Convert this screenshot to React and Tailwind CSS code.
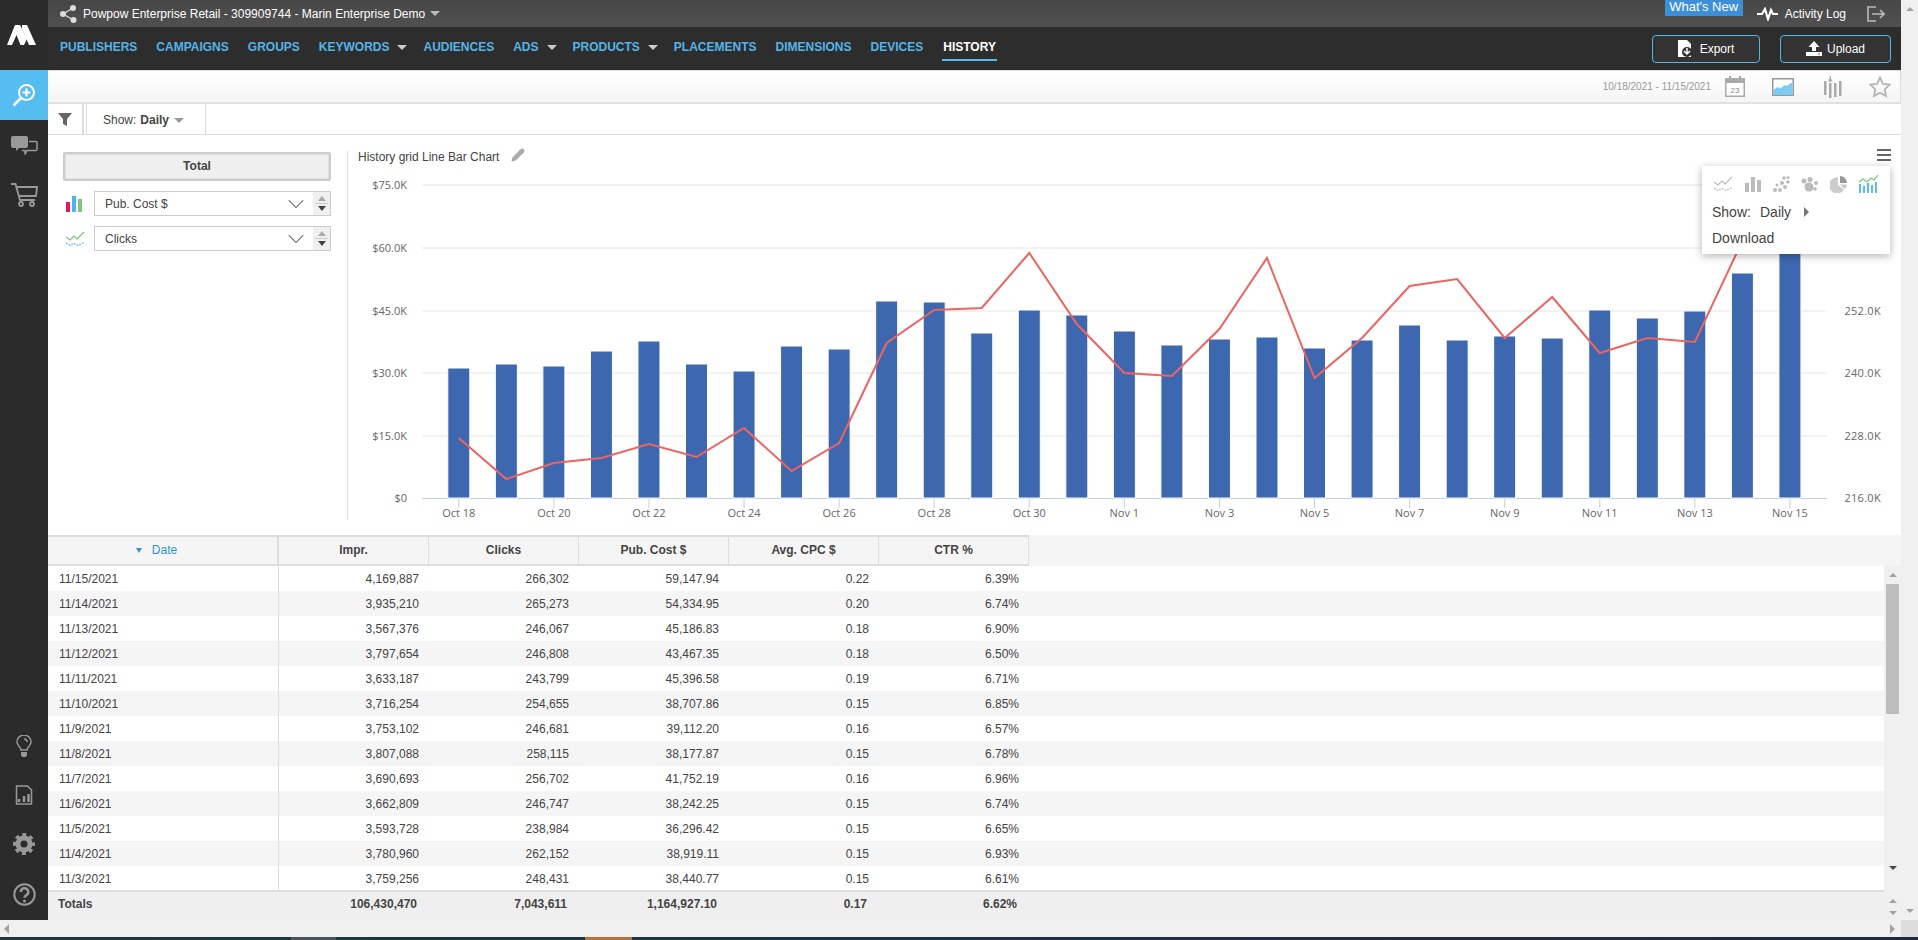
import React from 'react';
import { ChevronDown, Pencil } from 'lucide-react';

const NAV = [
  { label: 'PUBLISHERS' },
  { label: 'CAMPAIGNS' },
  { label: 'GROUPS' },
  { label: 'KEYWORDS', caret: true },
  { label: 'AUDIENCES' },
  { label: 'ADS', caret: true },
  { label: 'PRODUCTS', caret: true },
  { label: 'PLACEMENTS' },
  { label: 'DIMENSIONS' },
  { label: 'DEVICES' },
  { label: 'HISTORY', active: true },
];

const ROWS = [
  ['11/15/2021', '4,169,887', '266,302', '59,147.94', '0.22', '6.39%'],
  ['11/14/2021', '3,935,210', '265,273', '54,334.95', '0.20', '6.74%'],
  ['11/13/2021', '3,567,376', '246,067', '45,186.83', '0.18', '6.90%'],
  ['11/12/2021', '3,797,654', '246,808', '43,467.35', '0.18', '6.50%'],
  ['11/11/2021', '3,633,187', '243,799', '45,396.58', '0.19', '6.71%'],
  ['11/10/2021', '3,716,254', '254,655', '38,707.86', '0.15', '6.85%'],
  ['11/9/2021', '3,753,102', '246,681', '39,112.20', '0.16', '6.57%'],
  ['11/8/2021', '3,807,088', '258,115', '38,177.87', '0.15', '6.78%'],
  ['11/7/2021', '3,690,693', '256,702', '41,752.19', '0.16', '6.96%'],
  ['11/6/2021', '3,662,809', '246,747', '38,242.25', '0.15', '6.74%'],
  ['11/5/2021', '3,593,728', '238,984', '36,296.42', '0.15', '6.65%'],
  ['11/4/2021', '3,780,960', '262,152', '38,919.11', '0.15', '6.93%'],
  ['11/3/2021', '3,759,256', '248,431', '38,440.77', '0.15', '6.61%'],
];

const TOTALS = ['Totals', '106,430,470', '7,043,611', '1,164,927.10', '0.17', '6.62%'];

// chart pixel data, oldest day first
const BAR_TOPS = [368, 364, 366, 351, 341, 364, 371, 346, 349, 301, 302, 333, 310, 315, 331, 345, 339, 337, 348, 340, 325, 340, 336, 338, 310, 318, 311, 273, 251];
const LINE_Y = [438, 479, 463, 458, 444, 457, 428, 471, 443, 343, 310, 308, 253, 324, 373, 376, 329, 258, 378, 338, 286, 279, 338, 297, 353, 338, 342, 241, 236];
const X_LABELS = ['Oct 18', 'Oct 20', 'Oct 22', 'Oct 24', 'Oct 26', 'Oct 28', 'Oct 30', 'Nov 1', 'Nov 3', 'Nov 5', 'Nov 7', 'Nov 9', 'Nov 11', 'Nov 13', 'Nov 15'];
const GRID_Y = [185, 248, 311, 373, 436, 498];
const LEFT_AXIS = ['$75.0K', '$60.0K', '$45.0K', '$30.0K', '$15.0K', '$0'];
const RIGHT_AXIS = ['', '', '252.0K', '240.0K', '228.0K', '216.0K'];

const dayX = (i) => 458.8 + i * 47.54;

const Caret = ({ className = 'border-t-[#bbb]' }) => (
  <span className={`inline-block w-0 h-0 border-x-[5px] border-x-transparent border-t-[5px] ${className}`} />
);

const Logo = () => (
  <svg width="29" height="20" viewBox="0 0 29 20" fill="#fff">
    <polygon points="0,20 8,0 13,0 20,14 17,20 13.500,20 9.500,10 5,20" />
    <polygon points="15,0 20,0 29,20 22,20 15,4" />
  </svg>
);

const SearchIcon = () => (
  <svg width="24" height="24" viewBox="0 0 24 24" fill="none" stroke="#fff" strokeWidth="2">
    <circle cx="14.500" cy="9.500" r="7.500" />
    <path d="M9 15 L1.500 22.500" strokeWidth="2.500" />
    <path d="M14.500 5.500v8M10.500 9.500h8" strokeWidth="2.200" />
  </svg>
);

const ChatIcon = () => (
  <svg width="27" height="20" viewBox="0 0 27 20">
    <path d="M2 0h13a2 2 0 0 1 2 2v8a2 2 0 0 1-2 2H8l-3 3v-3H2a2 2 0 0 1-2-2V2a2 2 0 0 1 2-2z" fill="#999" />
    <path d="M18 5.500h7a1 1 0 0 1 1 1v7a1 1 0 0 1-1 1h-9l-2 4v-4h-3" fill="none" stroke="#999" strokeWidth="1.500" />
  </svg>
);

const CartIcon = () => (
  <svg width="27" height="24" viewBox="0 0 27 24" fill="none" stroke="#999" strokeWidth="1.800">
    <path d="M0 1h4.500l4.500 16h15" />
    <path d="M6 4h20l-1 9H8" />
    <circle cx="10" cy="21" r="2" />
    <circle cx="21" cy="21" r="2" />
  </svg>
);

const BulbIcon = () => (
  <svg width="16" height="22" viewBox="0 0 16 22" fill="none" stroke="#999" strokeWidth="1.500">
    <path d="M5 15c0-3-4-4-4-8a7 7 0 0 1 14 0c0 4-4 5-4 8z" />
    <path d="M5 17h6v3a2 2 0 0 1-2 2H7a2 2 0 0 1-2-2z" fill="#999" stroke="none" />
    <path d="M8 4a3 3 0 0 1 3 3" />
  </svg>
);

const ReportIcon = () => (
  <svg width="18" height="20" viewBox="0 0 18 20" fill="none" stroke="#999" strokeWidth="1.500">
    <path d="M1.500 1h11l4 4v14h-15z" />
    <path d="M4 17v-3M9 17v-6M13.500 17V9" strokeWidth="2.500" />
  </svg>
);

// ring plus a dashed outer circle for the eight teeth
const GearIcon = () => (
  <svg width="22" height="22" viewBox="0 0 22 22" fill="none" stroke="#999">
    <circle cx="11" cy="11" r="6" strokeWidth="5" />
    <circle cx="11" cy="11" r="9.500" strokeWidth="3" strokeDasharray="3.960 3.500" strokeDashoffset="2" />
  </svg>
);

const HelpIcon = () => (
  <svg width="23" height="23" viewBox="0 0 23 23" fill="none" stroke="#999" strokeWidth="2">
    <circle cx="11.500" cy="11.500" r="10.200" />
    <path d="M7.800 9a3.700 3.700 0 1 1 5.600 3.100c-1.300.8-1.900 1.300-1.900 2.700" strokeWidth="2.500" />
    <circle cx="11.500" cy="18" r="1.500" fill="#999" stroke="none" />
  </svg>
);

const ShareIcon = () => (
  <svg width="17" height="18" viewBox="0 0 17 18" fill="#ddd">
    <circle cx="3" cy="9" r="3" />
    <circle cx="13" cy="3" r="3" />
    <circle cx="13.500" cy="15" r="3" />
    <path d="M3 9 13 3M3 9l10.500 6" stroke="#ddd" strokeWidth="1.300" />
  </svg>
);

const PulseIcon = () => (
  <svg width="21" height="14" viewBox="0 0 21 14" fill="none" stroke="#fff" strokeWidth="2.200">
    <path d="M0 7h5l3 -5 3 10 3-9 2 4h5" />
  </svg>
);

const LogoutIcon = () => (
  <svg width="18" height="16" viewBox="0 0 18 16" fill="none" stroke="#bbb" strokeWidth="1.600">
    <path d="M9 1H1v14h8" />
    <path d="M5 8h12M13 4l4 4-4 4" />
  </svg>
);

const ExportIcon = () => (
  <svg width="14" height="17" viewBox="0 0 14 17">
    <path d="M0 0h9l4 4v13H0z" fill="#fff" />
    <circle cx="9" cy="12" r="5" fill="#333" />
    <path d="M9 8v5M6 11l3 3 3-3" fill="none" stroke="#fff" strokeWidth="1.500" />
  </svg>
);

const UploadIcon = () => (
  <svg width="16" height="15" viewBox="0 0 16 15">
    <path d="M8 0l5.500 6H10v4H6V6H2.500z" fill="#fff" />
    <path d="M0 11h16v4H0z" fill="#fff" />
    <path d="M12 12.500h2v1h-2z" fill="#e33" />
  </svg>
);

const CalendarIcon = () => (
  <svg width="20" height="21" viewBox="0 0 20 21">
    <path d="M0 2h20v19H0z" fill="#aaa" />
    <path d="M1.500 7h17v12.500h-17z" fill="#fff" />
    <path d="M4 0h2v3H4zM14 0h2v3h-2z" fill="#aaa" />
    <text x="10" y="17" textAnchor="middle" fontSize="8" fill="#888" fontFamily="Liberation Sans">23</text>
  </svg>
);

const AreaChartIcon = () => (
  <svg width="22" height="18" viewBox="0 0 22 18">
    <path d="M0 0h22v18H0z" fill="#999" />
    <path d="M1.500 1.500h19v15h-19z" fill="#fff" />
    <path d="M1.500 12l4-3 3 1.500 4-3.500 2 1 6-4v13h-19z" fill="#7ccbf2" />
  </svg>
);

const ColumnsIcon = () => (
  <svg width="18" height="22" viewBox="0 0 18 22" fill="#aaa">
    <path d="M0 5h2.500v14H0zM5 7h2.500v15H5zM10 7h2.500v14H10zM15 5h2.500v15H15z" />
    <path d="M6.300 0v5M4.500 3.500l1.800 2 1.800-2" stroke="#aaa" fill="none" strokeWidth="1.300" />
  </svg>
);

const StarIcon = () => (
  <svg width="22" height="22" viewBox="0 0 22 22" fill="none" stroke="#b5b5b5" strokeWidth="1.800">
    <path d="M11 1.500l2.900 6.300 6.800.8-5 4.700 1.300 6.800L11 16.800l-6 3.300 1.300-6.800-5-4.700 6.800-.8z" />
  </svg>
);

const BarMiniIcon = () => (
  <svg width="16" height="16" viewBox="0 0 16 16">
    <path d="M0 6h4v10H0z" fill="#e8175d" />
    <path d="M6 0h4v16H6z" fill="#4fb3e8" />
    <path d="M12 3h4v13h-4z" fill="#7dc67d" />
  </svg>
);

const LineMiniIcon = ({ top = '#7dc67d', bottom = '#5bbcf0' }) => (
  <svg width="19" height="16" viewBox="0 0 19 16" fill="none" strokeWidth="1.200">
    <path d="M0 6l4 3 4-4 3 3 7-7" stroke={top} />
    <path d="M0 12l4 2.500 4-2 4 2 6-3" stroke={bottom} strokeDasharray="2 1" />
  </svg>
);

const MENU_ICONS = [
  <LineMiniIcon key="line" top="#bbb" bottom="#bbb" />,
  <svg key="bar" width="16" height="16" viewBox="0 0 16 16" fill="#bbb"><path d="M0 7h4v9H0zM6 1h4v15H6zM12 4h4v12h-4z" /></svg>,
  <svg key="scatter" width="17" height="16" viewBox="0 0 17 16" fill="#bbb">
    <circle cx="2" cy="14" r="2" /><circle cx="7" cy="14" r="2" /><circle cx="12" cy="11" r="2" /><circle cx="4" cy="9" r="1.500" /><circle cx="9" cy="7" r="2" /><circle cx="15" cy="6" r="1.800" /><circle cx="11" cy="2" r="1.800" /><circle cx="15" cy="1.500" r="1.500" />
  </svg>,
  <svg key="bubble" width="17" height="15" viewBox="0 0 17 15" fill="#bbb">
    <circle cx="8" cy="10" r="4.500" /><circle cx="3" cy="4" r="2.500" /><circle cx="9" cy="2.500" r="2.500" /><circle cx="15" cy="6" r="2" /><circle cx="14" cy="12" r="1.800" />
  </svg>,
  <svg key="pie" width="17" height="17" viewBox="0 0 17 17">
    <path d="M8 1.500V9l6 4.500A8 8 0 1 1 8 1.500z" fill="#ccc" /><path d="M10 0a7 7 0 0 1 7 7h-7z" fill="#999" /><path d="M9.500 8.500H17a8 8 0 0 1-1.800 4.800z" fill="#ccc" />
  </svg>,
  <svg key="combo" width="19" height="18" viewBox="0 0 19 18" fill="none">
    <path d="M0 7l4-3 4 3 4-4 3 2 4-5" stroke="#7dc67d" strokeWidth="1.300" />
    <path d="M1 9v9M5 11v7M9 8v10M13 10v8M17 7v11" stroke="#5bbcf0" strokeWidth="2" />
  </svg>,
];

const Spinner = () => (
  <div className="flex flex-col items-center justify-center gap-[4px] w-[17px] h-full bg-[#f0f0f0] ml-[3px]">
    <span className="w-0 h-0 border-x-[4px] border-x-transparent border-b-[5px] border-b-[#aaa]" />
    <span className="w-[13px] border-t border-[#ccc] -my-[2px]" />
    <span className="w-0 h-0 border-x-[4px] border-x-transparent border-t-[5px] border-t-[#444]" />
  </div>
);

const MetricSelect = ({ icon, label }) => (
  <div className="flex items-center h-[25px]">
    <div className="w-[31px] pl-[3px] flex items-center">{icon}</div>
    <div className="flex-1 h-full flex items-center border border-[#ccc] pl-[10px]">
      <span className="flex-1 text-[#444]">{label}</span>
      <ChevronDown size={28} strokeWidth={0.9} color="#555" className="-my-[2px]" />
      <Spinner />
    </div>
  </div>
);

const Chart = () => (
  <svg width="1553" height="364" viewBox="348 171 1553 364" className="block" fontFamily="'Open Sans', sans-serif" fontSize="11" fill="#666">
    {GRID_Y.slice(0, 5).map((y) => (
      <line key={y} x1="422" x2="1827" y1={y} y2={y} stroke="#e6e6e6" strokeWidth="1" />
    ))}
    <line x1="422" x2="1827" y1="498.500" y2="498.500" stroke="#c0d0e0" />
    {GRID_Y.map((y, i) => (
      <text key={y} x="407" y={y + 4} textAnchor="end">{LEFT_AXIS[i]}</text>
    ))}
    {GRID_Y.map((y, i) => (
      <text key={y} x="1881" y={y + 4} textAnchor="end" letterSpacing="0.300">{RIGHT_AXIS[i]}</text>
    ))}
    {X_LABELS.map((label, i) => (
      <g key={label}>
        <line x1={dayX(i * 2)} x2={dayX(i * 2)} y1="498" y2="508" stroke="#c0d0e0" />
        <text x={dayX(i * 2)} y="517" textAnchor="middle">{label}</text>
      </g>
    ))}
    {BAR_TOPS.map((top, i) => (
      <rect key={i} x={dayX(i) - 11} y={top} width="22" height={498 - top} fill="#3d67ae" stroke="#fff" strokeWidth="1" />
    ))}
    <polyline
      points={LINE_Y.map((y, i) => `${dayX(i)},${y}`).join(' ')}
      fill="none"
      stroke="#ee6460"
      strokeWidth="2"
    />
  </svg>
);

const ChartMenu = () => (
  <div className="absolute left-[1654px] top-[31px] w-[188px] h-[88px] bg-white shadow-[0_2px_8px_rgba(0,0,0,0.3)] text-[14px] text-[#444] px-[10px] pt-[9px]">
    <div className="flex items-center justify-between pl-[2px] pr-[2px] h-[18px]">{MENU_ICONS}</div>
    <div className="flex items-center mt-[10px] h-[18px]">
      <span className="w-[48px]">Show:</span>
      <span className="w-[44px]">Daily</span>
      <span className="w-0 h-0 border-y-[5px] border-y-transparent border-l-[5px] border-l-[#777]" />
    </div>
    <div className="mt-[7px]">Download</div>
  </div>
);

const Cell = ({ children, className = 'pr-[10px]' }) => (
  <div className={`w-[150px] shrink-0 text-right ${className}`}>{children}</div>
);

const ScrollUp = () => <span className="w-0 h-0 border-x-[4px] border-x-transparent border-b-[4px] border-b-[#a3a3a3]" />;
const ScrollDown = ({ color = 'border-t-[#a3a3a3]', className = '' }) => (
  <span className={`w-0 h-0 border-x-[4px] border-x-transparent border-t-[4px] ${color} ${className}`} />
);

const Grid = () => (
  <div className="flex-1 flex flex-col min-h-0 bg-white">
    <div className="h-[31px] shrink-0 bg-[#f5f5f5]">
      <div className="flex h-full w-[981px] border-y-2 border-[#ddd] font-bold text-[#444]">
        <div className="w-[231px] shrink-0 flex items-center justify-center gap-[10px] pr-[12px] pb-[1px] font-normal text-[#2d95d6] border-r-2 border-[#ddd]">
          <span className="w-0 h-0 border-x-[3px] border-x-transparent border-t-[5px] border-t-[#2d95d6]" />
          Date
        </div>
        {['Impr.', 'Clicks', 'Pub. Cost $', 'Avg. CPC $', 'CTR %'].map((h) => (
          <div key={h} className="w-[150px] shrink-0 flex items-center justify-center pb-[1px] border-r border-[#ddd]">{h}</div>
        ))}
      </div>
    </div>
    <div className="flex-1 flex min-h-0">
      <div className="flex-1 flex flex-col min-w-0">
        <div className="flex-1 flex flex-col min-h-0">
          {ROWS.map((row, i) => (
            <div key={row[0]} className={`flex items-center h-[25px] shrink-0 text-[#444] ${i % 2 ? 'bg-[#f5f5f5]' : 'bg-white'}`}>
              <div className="w-[231px] h-full flex items-center shrink-0 pl-[11px] border-r border-[#ddd]">{row[0]}</div>
              {row.slice(1).map((v, j) => <Cell key={j}>{v}</Cell>)}
            </div>
          ))}
        </div>
        <div className="flex items-center h-[30px] border-t-2 border-[#ddd] bg-[#efefef] font-bold text-[#444] pb-[5px]">
          <div className="w-[231px] shrink-0 pl-[10px]">{TOTALS[0]}</div>
          {TOTALS.slice(1).map((v) => <Cell key={v} className="pr-[12px]">{v}</Cell>)}
        </div>
      </div>
      <div className="w-[17px] shrink-0 bg-[#f0f0f0] flex flex-col items-center pt-[7px] pb-[5px]">
        <ScrollUp />
        <div className="mt-[7px] w-[13px] h-[130px] bg-[#bdbdbd]" />
        <ScrollDown color="border-t-[#444]" className="mt-auto" />
        <span className="mt-[13px]"><ScrollUp /></span>
        <ScrollDown className="mt-[10px]" />
      </div>
    </div>
  </div>
);

export default function App() {
  return (
    <div className="w-[1918px] h-[940px] flex flex-col overflow-hidden bg-[#f0f0f0] text-[12px] font-['Liberation_Sans',Arial,sans-serif]">
      <div className="flex h-[920px]">
        {/* left rail */}
        <aside className="w-[48px] shrink-0 bg-[#2b2b2b] flex flex-col items-center">
          <div className="h-[70px] pt-[25px] -ml-[5px]"><Logo /></div>
          <div className="w-full h-[50px] bg-[#55bdf0] flex items-center justify-center"><SearchIcon /></div>
          <div className="mt-[16px]"><ChatIcon /></div>
          <div className="mt-[27px]"><CartIcon /></div>
          <div className="mt-auto mb-[14px] flex flex-col items-center gap-[28px]">
            <BulbIcon />
            <ReportIcon />
            <GearIcon />
            <HelpIcon />
          </div>
        </aside>

        <main className="flex-1 flex flex-col min-w-0">
          {/* account bar */}
          <div className="h-[27px] shrink-0 bg-gradient-to-b from-[#474747] to-[#505050] flex items-center pl-[12px] text-white relative">
            <ShareIcon />
            <span className="ml-[6px]">Powpow Enterprise Retail - 309909744 - Marin Enterprise Demo</span>
            <span className="ml-[5px] flex"><Caret /></span>
            <div className="ml-auto flex items-center h-full">
              <div className="self-start w-[78px] h-[16px] bg-[#3d8fd6] text-center text-[13px] leading-[14px] text-white">What's New</div>
              <span className="ml-[14px] flex"><PulseIcon /></span>
              <span className="ml-[7px]">Activity Log</span>
              <span className="ml-[21px] mr-[16px] flex"><LogoutIcon /></span>
            </div>
          </div>

          {/* nav */}
          <div className="h-[43px] shrink-0 bg-[#2d2d2d] flex items-center pl-[12px] pr-[10px] font-bold">
            <nav className="flex items-center gap-[19px] text-[#55b4e8] -mt-[3px]">
              {NAV.map((item) => (
                <span key={item.label} className="flex items-center gap-[8px]">
                  <span className={item.active ? 'text-white border-b-2 border-[#55bdf0] px-px pb-[3px] mt-[5px]' : ''}>{item.label}</span>
                  {item.caret && <Caret className="border-t-[#ccc] -mr-[3px]" />}
                </span>
              ))}
            </nav>
            <div className="ml-auto flex items-center gap-[20px] text-white font-normal text-[12px]">
              <button className="w-[108px] h-[28px] rounded-[4px] border border-[#4db8ea] bg-[#333] flex items-center justify-center gap-[8px]"><ExportIcon />Export</button>
              <button className="w-[111px] h-[28px] rounded-[4px] border border-[#4db8ea] bg-[#333] flex items-center justify-center gap-[5px]"><UploadIcon />Upload</button>
            </div>
          </div>

          {/* toolbar */}
          <div className="h-[34px] shrink-0 border-t border-[#ddd] border-b-2 border-b-[#e2e2e2] border-r border-r-[#ddd] bg-gradient-to-b from-white to-[#f5f5f5] flex items-center justify-end pr-[9px]">
            <span className="text-[10px] text-[#999] mr-[14px]">10/18/2021 - 11/15/2021</span>
            <CalendarIcon />
            <span className="ml-[27px]"><AreaChartIcon /></span>
            <span className="ml-[30px]"><ColumnsIcon /></span>
            <span className="ml-[27px]"><StarIcon /></span>
          </div>

          {/* filter row */}
          <div className="h-[31px] shrink-0 bg-white border-b border-[#ddd] flex items-center">
            <div className="w-[36px] h-full flex items-center justify-center border-r-2 border-[#ddd]">
              <svg width="14" height="13" viewBox="0 0 14 13" fill="#666"><path d="M0 0h14L9 6v7L5 11V6z" /></svg>
            </div>
            <div className="ml-[2px] pl-[16px] pt-[2px] w-[120px] h-full flex items-center border-l border-r border-[#ddd] text-[#444]">
              <span>Show:</span>
              <span className="ml-[4px] font-bold">Daily</span>
              <span className="ml-[5px] flex"><Caret className="border-t-[#999]" /></span>
            </div>
          </div>

          {/* chart area */}
          <div className="h-[400px] shrink-0 bg-white flex relative">
            <div className="w-[300px] shrink-0 mt-[16px] h-[369px] border-r border-[#ddd] pl-[15px] pr-[16px] pt-[1px]">
              <div className="h-[29px] pb-[1px] flex items-center justify-center bg-[#efefef] border-2 border-[#ccc] rounded-[2px] font-bold text-[#444] shadow-[inset_0_0_2px_rgba(0,0,0,0.2)]">Total</div>
              <div className="mt-[10px] flex flex-col gap-[10px]">
                <MetricSelect icon={<BarMiniIcon />} label="Pub. Cost $" />
                <MetricSelect icon={<LineMiniIcon />} label="Clicks" />
              </div>
            </div>
            <div className="flex-1 min-w-0">
              <div className="h-[36px] flex items-start pt-[13px] pl-[10px] pr-[10px] text-[#444]">
                <span>History grid Line Bar Chart</span>
                <Pencil size={14} className="ml-[12px]" color="#aaa" fill="#aaa" />
                <div className="ml-auto mt-[1px] w-[14px] flex flex-col gap-[3px]">
                  <span className="h-[2px] bg-[#666]" />
                  <span className="h-[2px] bg-[#666]" />
                  <span className="h-[2px] bg-[#666]" />
                </div>
              </div>
              <Chart />
            </div>
            <ChartMenu />
          </div>

          {/* data grid with its own scrollbar */}
          <Grid />
        </main>

        {/* page scrollbar */}
        <div className="w-[17px] shrink-0 bg-[#f0f0f0] flex flex-col items-center justify-between pt-[7px] pb-[7px]">
          <ScrollUp />
          <ScrollDown />
        </div>
      </div>

      <div className="h-[17px] shrink-0 flex items-center pl-[4px] bg-[#f0f0f0]">
        <span className="w-0 h-0 border-y-[5px] border-y-transparent border-r-[5px] border-r-[#a3a3a3]" />
        <span className="ml-auto mr-[6px] w-0 h-0 border-y-[5px] border-y-transparent border-l-[5px] border-l-[#a3a3a3]" />
        <span className="w-[17px] h-full bg-[#ddd]" />
      </div>
      <div className="h-[3px] shrink-0 bg-gradient-to-r from-[#1f3a42] to-[#1c2a45] flex">
        <span className="ml-[291px] w-[45px] bg-[#4a5560]" />
        <span className="ml-[249px] w-[47px] bg-[#b4733a]" />
      </div>
    </div>
  );
}
